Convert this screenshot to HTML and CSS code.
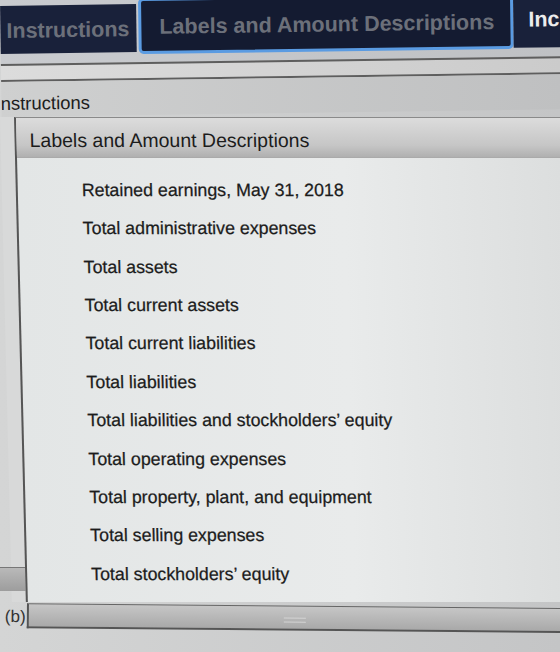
FILE: index.html
```html
<!DOCTYPE html>
<html lang="en">
<head>
<meta charset="UTF-8" />
<meta name="viewport" content="width=device-width, initial-scale=1.0" />
<title>Labels and Amount Descriptions</title>
<link rel="stylesheet" href="styles.css">
</head>

<body>
    <header class="top">
        <div class="tabs">
            <div class="tab">Instructions</div>
            <div class="tab active">Labels and Amount Descriptions</div>
            <div class="tab cut">Inc</div>
        </div>

        <div class="rule-band"></div>

        <div class="section-title"><span>Instructions</span></div>
    </header>

    <div class="section">
        <div class="body-row">
            <div class="gutter">
                <div class="stub"></div>
            </div>

            <div class="panel">
                <div class="panel-head">Labels and Amount Descriptions</div>
                <ul class="labels">
                    <li>Retained earnings, May 31, 2018</li>
                    <li>Total administrative expenses</li>
                    <li>Total assets</li>
                    <li>Total current assets</li>
                    <li>Total current liabilities</li>
                    <li>Total liabilities</li>
                    <li>Total liabilities and stockholders’ equity</li>
                    <li>Total operating expenses</li>
                    <li>Total property, plant, and equipment</li>
                    <li>Total selling expenses</li>
                    <li>Total stockholders’ equity</li>
                </ul>
            </div>
        </div>

        <div class="footer-row">
            <span class="part">(b)</span>
            <div class="resize-bar">
                <span class="grip"></span>
            </div>
        </div>
    </div>
</body>

</html>
```

FILE: styles.css
```css
body {
    margin: 0;
    font-family: "Liberation Sans", Arial, sans-serif;
    background: linear-gradient(to right, #d4d5d5, #c4c5c6);
    overflow: hidden;
    color: #1c1c1c;
}

/* the screen was photographed at a slight angle, so the top
   strip tilts up to the right and the bottom bar down */
.top {
    transform: rotate(-0.8deg);
    transform-origin: 0 0;
}

/* Tab strip */
.tabs {
    display: flex;
    align-items: flex-start;
    height: 64px;
    background: linear-gradient(to right, #c9cbcf, #bfc1c4);
}

.tab {
    background-color: #19213a;
    color: #6c707a;
    font-weight: bold;
    font-size: 21.5px;
    box-sizing: border-box;
    display: flex;
    align-items: center;
    white-space: nowrap;
}

.tab:first-child {
    margin-top: 6px;
    margin-right: 2px;
    height: 48px;
    width: 136px;
    padding: 2px 0 0 6px;
}

.tab.active {
    height: 56px;
    width: 375px;
    padding: 2px 0 0 18px;
    border: 3px solid #5a9be2;
    border-radius: 5px;
    background-color: #141b31;
}

.tab.cut {
    height: 55px;
    flex: 1;
    padding: 0 0 0 15px;
    color: #ececec;
    overflow: hidden;
}

/* double rule under the tabs */
.rule-band {
    height: 14px;
    border-top: 2px solid #5e5e5e;
    border-bottom: 2px solid #5e5e5e;
    background: linear-gradient(to right, #dcdcdc, #cbcbcb);
}

.section-title {
    height: 35px;
    overflow: hidden;
    font-size: 18.5px;
    line-height: 44px;
    white-space: nowrap;
    background: linear-gradient(to right, #cfd0d0, #bfc0c1);
}

.section-title span {
    display: inline-block;
    margin-left: -6px;
}

.body-row {
    display: flex;
    transform: skewX(1.4deg);
    transform-origin: top left;
}

.gutter {
    width: 14px;
    display: flex;
    flex-direction: column;
    justify-content: flex-end;
    padding-bottom: 11px;
    background: #d8d9d9;
}

.gutter .stub {
    height: 23px;
    margin-left: -16px;
    border-top: 1px solid #777;
    background: linear-gradient(#b9b9b9, #9d9d9d);
}

.panel {
    flex: 1;
    border-left: 2px solid #555;
    border-top: 1px solid #8a8a8a;
    background: linear-gradient(to right, #e3e6e6, #e9ebeb 60%, #dcdede);
}

.panel-head {
    height: 39px;
    padding-left: 13px;
    font-size: 19.5px;
    line-height: 44px;
    background: linear-gradient(#dcdcdc, #c6c6c6 70%, #b0b0b0);
    border-bottom: 1px solid #aaa;
}

.labels {
    list-style: none;
    margin: 0;
    padding: 12.8px 0 9px 64px;
}

.labels li {
    font-size: 17.8px;
    height: 38.4px;
    line-height: 38.4px;
    white-space: nowrap;
    -webkit-text-stroke: 0.25px #1c1c1c;
}

.footer-row {
    display: flex;
    align-items: flex-end;
    height: 26px;
    padding-bottom: 26px;
    transform: rotate(0.5deg);
    transform-origin: 0 0;
}

.part {
    width: 27px;
    padding-left: 5px;
    box-sizing: border-box;
    font-size: 17px;
    line-height: 22px;
    color: #333;
}

.resize-bar {
    flex: 1;
    height: 22px;
    margin-right: -10px;
    border-top: 1px solid #666;
    border-bottom: 2px solid #555;
    border-left: 2px solid #555;
    background: linear-gradient(#c6c6c6, #a9a9a9);
    display: flex;
    justify-content: center;
    align-items: center;
}

.grip {
    width: 22px;
    height: 3px;
    margin: 4px 10px 0 0;
    border-top: 1px solid #d4d4d4;
    border-bottom: 1px solid #d4d4d4;
}
```
